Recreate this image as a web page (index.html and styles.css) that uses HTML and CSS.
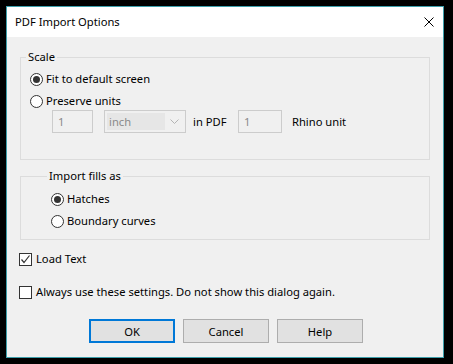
FILE: index.html
```html
<!DOCTYPE html>
<html>
<head>
<meta charset="utf-8">
<link rel="stylesheet" href="styles.css">
</head>
<body>
<div class="dialog">
  <div class="titlebar">
    <span class="title">PDF Import Options</span>
    <svg class="close" width="10" height="10" viewBox="0 0 10 10"><path d="M0.5 0.5L9.5 9.5M9.5 0.5L0.5 9.5" stroke="#000" stroke-width="1" fill="none"/></svg>
  </div>
  <div class="content">
    <fieldset class="group scale">
      <legend>Scale</legend>
      <div class="opt"><span class="radio on"></span><span>Fit to default screen</span></div>
      <div class="opt"><span class="radio"></span><span>Preserve units</span></div>
      <div class="units">
        <span class="field f1">1</span>
        <span class="select"><span class="sel-text">inch</span><svg class="chev" width="9" height="5" viewBox="0 0 9 5"><path d="M0.5 0.5L4.5 4.5L8.5 0.5" stroke="#b4b4b4" fill="none"/></svg></span>
        <span class="lbl pdf">in PDF</span>
        <span class="field f2">1</span>
        <span class="lbl rhino">Rhino unit</span>
      </div>
    </fieldset>
    <fieldset class="group fills">
      <legend>Import fills as</legend>
      <div class="opt"><span class="radio on"></span><span>Hatches</span></div>
      <div class="opt"><span class="radio"></span><span>Boundary curves</span></div>
    </fieldset>
    <div class="opt chk load"><span class="box on"><svg width="11" height="11" viewBox="0 0 11 11"><path d="M1.5 5.5L4 8.5L9.5 1.5" stroke="#333" stroke-width="1.2" fill="none"/></svg></span><span>Load Text</span></div>
    <div class="opt chk always"><span class="box"></span><span>Always use these settings. Do not show this dialog again.</span></div>
    <div class="buttons">
      <span class="btn default">OK</span>
      <span class="btn">Cancel</span>
      <span class="btn">Help</span>
    </div>
  </div>
</div>
</body>
</html>
```
FILE: styles.css
```css
body {
  margin: 0;
  background: #000;
  font-family: "Noto Sans", "Open Sans", sans-serif;
  font-size: 11.2px;
  color: #000;
}
.dialog {
  margin: 6px 0 0 6px;
  width: 438px;
  height: 352px;
  box-sizing: border-box;
  border: 1px solid #3d9fab;
  background: #f0f0f0;
  display: flex;
  flex-direction: column;
}
.titlebar {
  height: 30px;
  background: #fff;
  display: flex;
  align-items: center;
  justify-content: space-between;
  padding: 0 9px 0 8px;
  flex: none;
}
.title {
  line-height: 16px;
}
.content {
  padding: 12px 13px 0 13px;
  display: flex;
  flex-direction: column;
}
.group {
  margin: 0;
  border: 1px solid #dcdcdc;
  min-width: 0;
}
.group legend {
  padding: 0 2px;
  margin-left: -4px;
  line-height: 16px;
}
.scale {
  padding: 4px 9px 26px 9px;
}
.fills {
  margin-top: 8px;
  padding: 5px 9px 8px 30px;
}
.opt {
  height: 20px;
  display: flex;
  align-items: center;
  gap: 3px;
  line-height: 16px;
}
.group .opt + .opt {
  margin-top: 2px;
}
.radio {
  width: 13px;
  height: 13px;
  box-sizing: border-box;
  border: 1px solid #333;
  border-radius: 50%;
  background: #fff;
  display: flex;
  align-items: center;
  justify-content: center;
  flex: none;
}
.radio.on::after {
  content: "";
  width: 7px;
  height: 7px;
  border-radius: 50%;
  background: #333;
}
.units {
  margin-top: -1px;
  height: 23px;
  display: flex;
  align-items: center;
  padding-left: 22px;
}
.field {
  height: 23px;
  box-sizing: border-box;
  border: 1px solid #cccccc;
  background: #f0f0f0;
  color: #8a8a8a;
  padding-left: 5px;
  display: flex;
  align-items: center;
}
.f1 {
  width: 41px;
}
.f2 {
  width: 44px;
}
.select {
  margin-left: 11px;
  width: 82px;
  height: 23px;
  box-sizing: border-box;
  border: 1px solid #cccccc;
  background: #f0f0f0;
  display: flex;
  align-items: center;
  padding: 2px;
}
.sel-text {
  flex: 1;
  height: 100%;
  background: #e6e6e6;
  color: #8a8a8a;
  padding-left: 2px;
  display: flex;
  align-items: center;
}
.chev {
  margin: 0 4px 0 5px;
}
.lbl.pdf {
  margin-left: 7px;
  width: 45px;
}
.lbl.rhino {
  margin-left: 10px;
}
.chk {
  gap: 4px;
}
.load {
  margin-top: 9px;
  margin-left: -1px;
}
.always {
  margin-top: 13px;
  margin-left: -1px;
}
.box {
  width: 13px;
  height: 13px;
  box-sizing: border-box;
  border: 1px solid #333;
  background: #fff;
  display: flex;
  align-items: center;
  justify-content: center;
  flex: none;
}
.box svg {
  display: block;
}
.buttons {
  margin-top: 17px;
  padding-left: 69px;
  display: flex;
  gap: 8px;
}
.btn {
  width: 86px;
  height: 24px;
  box-sizing: border-box;
  border: 1px solid #adadad;
  background: #e1e1e1;
  display: flex;
  align-items: center;
  justify-content: center;
}
.btn.default {
  border: 2px solid #0078d7;
}
```
